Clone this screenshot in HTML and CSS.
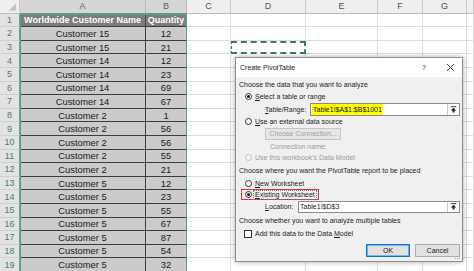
FILE: index.html
```html
<!DOCTYPE html>
<html>
<head>
<meta charset="utf-8">
<link rel="stylesheet" href="styles.css">
</head>
<body>
<div class="sheet">
  <div class="row hdr">
    <div class="corner"><svg width="20" height="13" viewBox="0 0 20 13"><polygon points="17,3 17,11 9,11" fill="#c4c4c4"/></svg></div>
    <div class="c colsel">A</div><div class="c colsel">B</div><div class="c">C</div><div class="c">D</div><div class="c">E</div><div class="c">F</div><div class="c">G</div><div class="c"></div>
  </div>
  <div class="row"><div class="rh">1</div><div class="c th">Worldwide Customer Name</div><div class="c th">Quantity</div><div class="c"></div><div class="c"></div><div class="c"></div><div class="c"></div><div class="c"></div><div class="c"></div></div>
  <div class="row"><div class="rh">2</div><div class="c td">Customer 15</div><div class="c td">12</div><div class="c"></div><div class="c"></div><div class="c"></div><div class="c"></div><div class="c"></div><div class="c"></div></div>
  <div class="row"><div class="rh">3</div><div class="c td">Customer 15</div><div class="c td">21</div><div class="c"></div><div class="c marquee"></div><div class="c"></div><div class="c"></div><div class="c"></div><div class="c"></div></div>
  <div class="row"><div class="rh">4</div><div class="c td">Customer 14</div><div class="c td">12</div><div class="c"></div><div class="c"></div><div class="c"></div><div class="c"></div><div class="c"></div><div class="c"></div></div>
  <div class="row"><div class="rh">5</div><div class="c td">Customer 14</div><div class="c td">23</div><div class="c"></div><div class="c"></div><div class="c"></div><div class="c"></div><div class="c"></div><div class="c"></div></div>
  <div class="row"><div class="rh">6</div><div class="c td">Customer 14</div><div class="c td">69</div><div class="c"></div><div class="c"></div><div class="c"></div><div class="c"></div><div class="c"></div><div class="c"></div></div>
  <div class="row"><div class="rh">7</div><div class="c td">Customer 14</div><div class="c td">67</div><div class="c"></div><div class="c"></div><div class="c"></div><div class="c"></div><div class="c"></div><div class="c"></div></div>
  <div class="row"><div class="rh">8</div><div class="c td">Customer 2</div><div class="c td">1</div><div class="c"></div><div class="c"></div><div class="c"></div><div class="c"></div><div class="c"></div><div class="c"></div></div>
  <div class="row"><div class="rh">9</div><div class="c td">Customer 2</div><div class="c td">56</div><div class="c"></div><div class="c"></div><div class="c"></div><div class="c"></div><div class="c"></div><div class="c"></div></div>
  <div class="row"><div class="rh">10</div><div class="c td">Customer 2</div><div class="c td">56</div><div class="c"></div><div class="c"></div><div class="c"></div><div class="c"></div><div class="c"></div><div class="c"></div></div>
  <div class="row"><div class="rh">11</div><div class="c td">Customer 2</div><div class="c td">55</div><div class="c"></div><div class="c"></div><div class="c"></div><div class="c"></div><div class="c"></div><div class="c"></div></div>
  <div class="row"><div class="rh">12</div><div class="c td">Customer 2</div><div class="c td">21</div><div class="c"></div><div class="c"></div><div class="c"></div><div class="c"></div><div class="c"></div><div class="c"></div></div>
  <div class="row"><div class="rh">13</div><div class="c td">Customer 5</div><div class="c td">12</div><div class="c"></div><div class="c"></div><div class="c"></div><div class="c"></div><div class="c"></div><div class="c"></div></div>
  <div class="row"><div class="rh">14</div><div class="c td">Customer 5</div><div class="c td">23</div><div class="c"></div><div class="c"></div><div class="c"></div><div class="c"></div><div class="c"></div><div class="c"></div></div>
  <div class="row"><div class="rh">15</div><div class="c td">Customer 5</div><div class="c td">55</div><div class="c"></div><div class="c"></div><div class="c"></div><div class="c"></div><div class="c"></div><div class="c"></div></div>
  <div class="row"><div class="rh">16</div><div class="c td">Customer 5</div><div class="c td">67</div><div class="c"></div><div class="c"></div><div class="c"></div><div class="c"></div><div class="c"></div><div class="c"></div></div>
  <div class="row"><div class="rh">17</div><div class="c td">Customer 5</div><div class="c td">87</div><div class="c"></div><div class="c"></div><div class="c"></div><div class="c"></div><div class="c"></div><div class="c"></div></div>
  <div class="row"><div class="rh">18</div><div class="c td">Customer 5</div><div class="c td">54</div><div class="c"></div><div class="c"></div><div class="c"></div><div class="c"></div><div class="c"></div><div class="c"></div></div>
  <div class="row"><div class="rh">19</div><div class="c td">Customer 5</div><div class="c td">32</div><div class="c"></div><div class="c"></div><div class="c"></div><div class="c"></div><div class="c"></div><div class="c"></div></div>
</div>
<div class="selection"></div>

<div class="dlg">
  <div class="title">
    <span class="title-text">Create PivotTable</span>
    <span class="help">?</span>
    <svg class="close" width="9" height="9" viewBox="0 0 9 9"><path d="M1 1L8 8M8 1L1 8" stroke="#333" stroke-width="0.9"/></svg>
  </div>
  <div class="body">
    <div class="line l-h1">Choose the data that you want to analyze</div>
    <div class="line l-r1"><span class="radio on"></span><span><u>S</u>elect a table or range</span></div>
    <div class="line l-tr">
      <span class="lbl lbl-tr"><u>T</u>able/Range:</span>
      <div class="input"><span class="val"><span class="hl">Table1!$A$1:$B$1001</span></span><span class="ibtn"><svg width="7" height="7" viewBox="0 0 7 7"><path d="M0.8 0.7H6.2" stroke="#222" stroke-width="0.9"/><polygon points="3.5,1.8 6.2,4.4 4.4,4.4 4.4,6.6 2.6,6.6 2.6,4.4 0.8,4.4" fill="#222"/></svg></span></div>
    </div>
    <div class="line l-r2"><span class="radio"></span><span><u>U</u>se an external data source</span></div>
    <div class="line l-btn"><span class="dbtn">Choose Connection...</span></div>
    <div class="line l-cn"><span class="dis">Connection name:</span></div>
    <div class="line l-r3"><span class="radio off"></span><span class="dis">Use this workbook’s Data Model</span></div>
    <div class="line l-h2">Choose where you want the PivotTable report to be placed</div>
    <div class="line l-nw"><span class="radio"></span><span><u>N</u>ew Worksheet</span></div>
    <div class="line l-ew"><span class="redbox"><span class="radio on"></span><span class="focus"><u>E</u>xisting Worksheet</span></span></div>
    <div class="line l-loc">
      <span class="lbl lbl-loc"><u>L</u>ocation:</span>
      <div class="input"><span class="val">Table1!$D$3</span><span class="ibtn"><svg width="7" height="7" viewBox="0 0 7 7"><path d="M0.8 0.7H6.2" stroke="#222" stroke-width="0.9"/><polygon points="3.5,1.8 6.2,4.4 4.4,4.4 4.4,6.6 2.6,6.6 2.6,4.4 0.8,4.4" fill="#222"/></svg></span></div>
    </div>
    <div class="line l-h3">Choose whether you want to analyze multiple tables</div>
    <div class="line l-cb"><span class="check"></span><span>Add this data to the Data <u>M</u>odel</span></div>
    <div class="buttons">
      <span class="btn ok">OK</span>
      <span class="btn">Cancel</span>
    </div>
  </div>
  <svg class="grip" width="7" height="7" viewBox="0 0 7 7"><g fill="#a0a0a0"><rect x="5" y="1" width="1" height="1"/><rect x="3" y="3" width="1" height="1"/><rect x="5" y="3" width="1" height="1"/><rect x="1" y="5" width="1" height="1"/><rect x="3" y="5" width="1" height="1"/><rect x="5" y="5" width="1" height="1"/></g></svg>
</div>
</body>
</html>
```
FILE: styles.css
```css
html, body {
  margin: 0;
  padding: 0;
}
body {
  width: 474px;
  height: 271px;
  overflow: hidden;
  position: relative;
  background: #ffffff;
  font-family: "Liberation Sans", Arial, sans-serif;
}

/* ---------- spreadsheet ---------- */
.sheet {
  display: flex;
  flex-direction: column;
}
.row {
  display: grid;
  grid-template-columns: 20px 126px 41px 44px 75px 72px 45px 44px 7px;
  height: 13.6px;
}
.c {
  box-sizing: border-box;
  border-right: 1px solid #dcdcdc;
  border-bottom: 1px solid #dcdcdc;
  display: flex;
  align-items: center;
  justify-content: center;
  font-size: 9.2px;
  color: #222;
  white-space: nowrap;
  overflow: hidden;
}
.hdr .c {
  background: #efefef;
  color: #555;
  font-size: 9px;
  border-right-color: #c8c8c8;
  border-bottom-color: #bdbdbd;
}
.hdr .colsel {
  background: #d6d6d6;
  color: #4f6a5c;
  border-bottom: 1px solid #5f9a7d;
  border-right-color: #b8b8b8;
}
.corner {
  background: #efefef;
  border-right: 1px solid #c8c8c8;
  border-bottom: 1px solid #bdbdbd;
  box-sizing: border-box;
  display: flex;
  overflow: hidden;
}
.rh {
  box-sizing: border-box;
  background: #e3e3e3;
  color: #4f7d66;
  font-size: 9px;
  display: flex;
  align-items: center;
  justify-content: center;
  border-right: 1px solid #6aa586;
  border-bottom: 1px solid #d0d0d0;
}
.th {
  background: #7c7c7c;
  color: #ffffff;
  font-weight: bold;
  font-size: 9px;
  border-right-color: #4a4a4a;
  border-bottom-color: #3c3c3c;
}
.td {
  background: #cbcbcb;
  color: #1a1a1a;
  font-size: 9.4px;
  border-right-color: #3c3c3c;
  border-bottom-color: #3c3c3c;
}
.marquee {
  border: 2px dashed #3a7d5c;
  border-left-width: 1.5px;
}
.selection {
  position: absolute;
  left: 19.5px;
  top: 13.6px;
  width: 167px;
  height: 262px;
  box-sizing: border-box;
  border: 1.5px solid #5b9f7d;
  pointer-events: none;
}

/* ---------- dialog ---------- */
.dlg {
  position: absolute;
  left: 235px;
  top: 57px;
  width: 228px;
  height: 205px;
  box-sizing: border-box;
  background: #f0f0f0;
  border: 1px solid #8f8f8f;
  box-shadow: 0 0 5px rgba(0, 0, 0, 0.35);
  font-size: 7px;
  color: #1c1c1c;
  display: flex;
  flex-direction: column;
}
.title {
  height: 19px;
  flex: none;
  background: #ffffff;
  display: flex;
  align-items: center;
  padding-left: 4px;
  font-size: 7px;
  color: #222;
}
.title-text {
  flex: 1;
}
.help {
  font-size: 7.5px;
  color: #333;
  margin-right: 20px;
}
.close {
  margin-right: 7px;
}
.body {
  display: flex;
  flex-direction: column;
  padding: 1px 2px 0 3px;
}
.line {
  display: flex;
  align-items: center;
  white-space: nowrap;
  flex: none;
}
.l-h1 { height: 12px; }
.l-r1 { height: 13px; padding-left: 6px; gap: 3px; }
.l-tr { height: 13px; padding-left: 26px; }
.l-r2 { height: 11px; padding-left: 6px; gap: 3px; }
.l-btn { height: 13px; padding-left: 26px; }
.l-cn { height: 12px; padding-left: 31px; }
.l-r3 { height: 11px; padding-left: 6px; gap: 3px; }
.l-h2 { height: 14px; }
.l-nw { height: 12px; padding-left: 6px; gap: 3px; }
.l-ew { height: 11px; padding-left: 2px; }
.l-loc { height: 13px; padding-left: 26px; }
.l-h3 { height: 14px; }
.l-cb { height: 13px; padding-left: 5px; gap: 3px; }

u {
  text-decoration: underline;
  text-underline-offset: 1px;
  text-decoration-thickness: 0.5px;
}

.radio {
  width: 7px;
  height: 7px;
  box-sizing: border-box;
  border: 1px solid #333;
  border-radius: 50%;
  background: #ffffff;
  display: flex;
  align-items: center;
  justify-content: center;
  flex: none;
}
.radio.on::after {
  content: "";
  width: 3px;
  height: 3px;
  border-radius: 50%;
  background: #111;
}
.radio.off {
  border-color: #c2c2c2;
  background: #f4f4f4;
}
.dis {
  color: #9a9a9a;
}
.check {
  width: 8px;
  height: 8px;
  box-sizing: border-box;
  border: 1px solid #333;
  background: #ffffff;
  flex: none;
}

.lbl-tr { width: 45px; flex: none; }
.lbl-loc { width: 33px; flex: none; }
.input {
  flex: 1;
  height: 13px;
  box-sizing: border-box;
  border: 1px solid #8a8a8a;
  background: #ffffff;
  display: flex;
  align-items: center;
}
.l-loc .input { height: 12px; }
.val {
  flex: 1;
  padding-left: 1px;
  display: flex;
  align-items: center;
  height: 100%;
}
.hl {
  background: #ffff00;
  color: #111;
  padding: 1px 1px;
  line-height: 9px;
}
.ibtn {
  width: 11px;
  height: 100%;
  border-left: 1px solid #c8c8c8;
  display: flex;
  align-items: center;
  justify-content: center;
  background: #fbfbfb;
}

.dbtn {
  width: 76px;
  height: 12px;
  box-sizing: border-box;
  background: #e6e6e6;
  border: 1px solid #c6c6c6;
  color: #a0a0a0;
  display: flex;
  align-items: center;
  justify-content: center;
}

.redbox {
  display: flex;
  align-items: center;
  gap: 2px;
  height: 11px;
  box-sizing: border-box;
  border: 1px solid #e0343a;
  padding: 0 2px 0 3px;
}
.focus {
  outline: 0.5px dotted #777;
  padding: 0 1px;
  line-height: 8px;
}

.buttons {
  display: flex;
  justify-content: flex-end;
  gap: 5px;
  margin-top: 4px;
  padding-right: 0;
}
.btn {
  width: 45px;
  height: 13px;
  box-sizing: border-box;
  background: #e1e1e1;
  border: 1px solid #adadad;
  display: flex;
  align-items: center;
  justify-content: center;
  color: #222;
}
.btn.ok {
  width: 44px;
  border: 1px solid #0a73d1;
  box-shadow: inset 0 0 0 0.6px #2f8be0;
}
.grip {
  position: absolute;
  right: 1px;
  bottom: 1px;
}
```
